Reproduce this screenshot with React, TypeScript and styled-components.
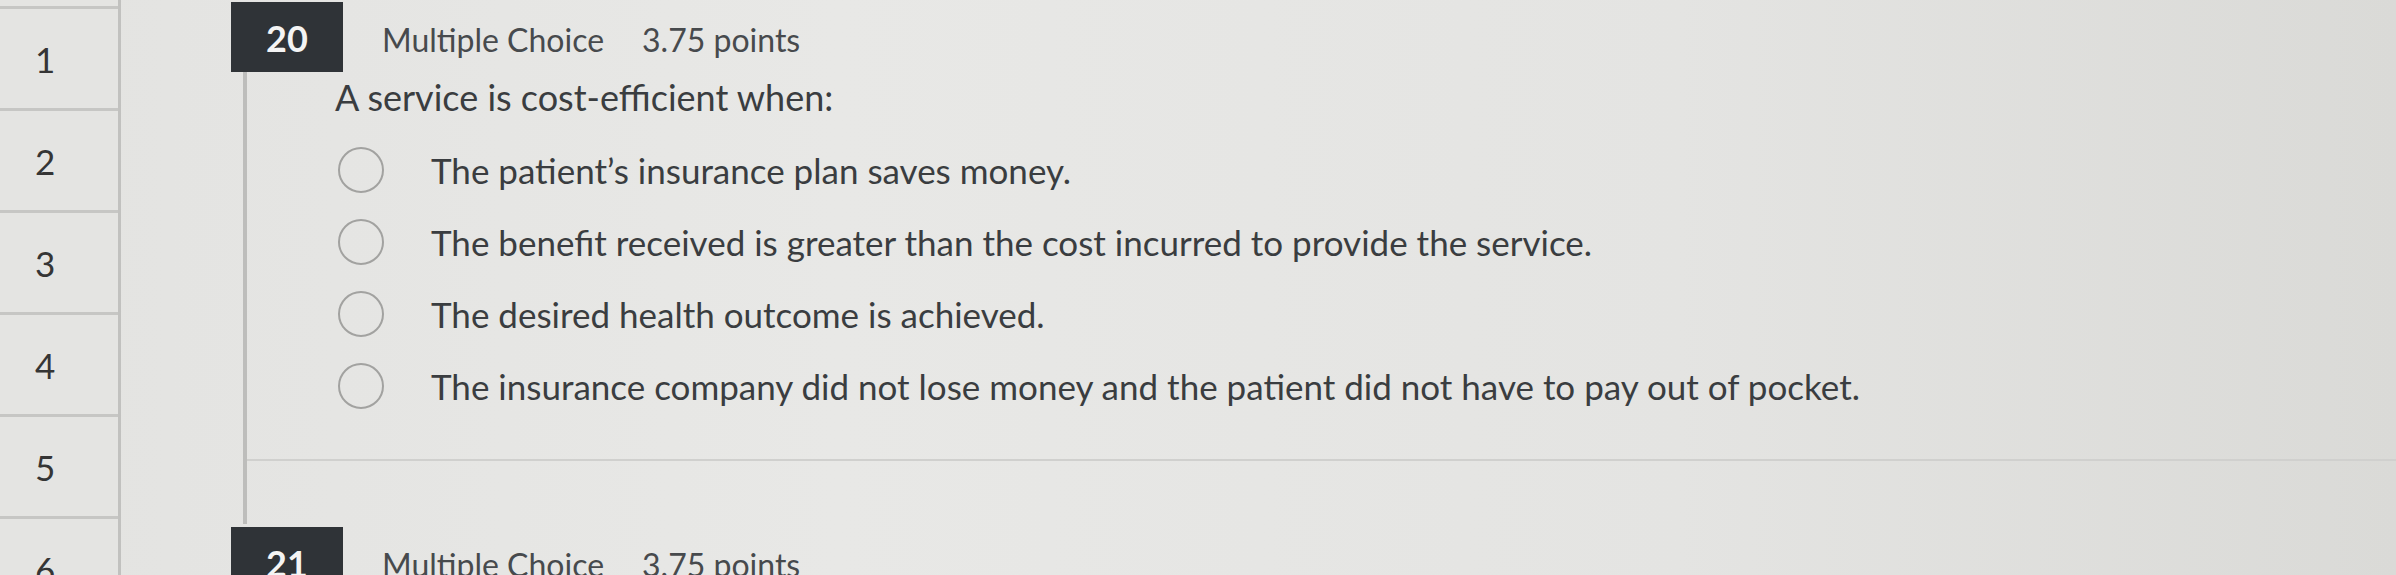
import styled, { createGlobalStyle } from "styled-components";

const GlobalStyle = createGlobalStyle`
  html,
  body {
    margin: 0;
    height: 575px;
    overflow: hidden;
  }

  body {
    background: linear-gradient(90deg, #e3e3e1 0%, #e8e8e6 35%, #e4e4e2 70%, #dadad7 100%);
    font-family: Lato, "Noto Sans", sans-serif;
    color: #3a3d40;
  }
`;

const Page = styled.div`
  display: flex;
  height: 575px;
  overflow: hidden;
`;

const Nav = styled.ul`
  list-style: none;
  margin: 0;
  padding: 6px 0 0;
  width: 118px;
  flex-shrink: 0;
  border-right: 3px solid #c1c1bf;
  background: #e4e4e2;
`;

const NavItem = styled.li`
  box-sizing: border-box;
  height: 102px;
  border-top: 3px solid #c6c6c4;
  display: flex;
  align-items: center;
  padding-left: 35px;
  font-size: 35px;
  color: #353535;
`;

const Main = styled.main`
  flex: 1;
  padding: 2px 0 0 110px;
`;

const Question = styled.section`
  & + & {
    margin-top: 3px;
  }
`;

const Header = styled.header`
  display: flex;
  align-items: baseline;
`;

const Badge = styled.span`
  box-sizing: border-box;
  width: 112px;
  height: 70px;
  padding-top: 2px;
  display: flex;
  align-items: center;
  justify-content: center;
  background: #2f3337;
  color: #f4f4f4;
  font-size: 36px;
  font-weight: 700;
`;

const HeaderText = styled.span<{ $gap: number }>`
  margin-left: ${(p) => p.$gap}px;
  font-size: 32px;
  color: #474a4d;
`;

const Body = styled.div`
  margin-left: 12px;
  border-left: 4px solid #bdbdbb;
  padding-bottom: 63px;
`;

const Prompt = styled.p`
  margin: 0;
  padding: 4px 0 0 88px;
  font-size: 36px;
  line-height: 1.2;
`;

const Answers = styled.div`
  margin-top: 15px;
  padding: 0 0 37px 91px;
  border-bottom: 2px solid #d0d0ce;
`;

const Answer = styled.label`
  display: flex;
  align-items: center;
  height: 72px;
  font-size: 35px;
`;

const Radio = styled.span`
  box-sizing: border-box;
  width: 46px;
  height: 46px;
  flex-shrink: 0;
  border: 2.5px solid #a2a2a0;
  border-radius: 50%;
  margin-right: 47px;
`;

const answers = [
  "The patient’s insurance plan saves money.",
  "The benefit received is greater than the cost incurred to provide the service.",
  "The desired health outcome is achieved.",
  "The insurance company did not lose money and the patient did not have to pay out of pocket.",
];

export default function App() {
  return (
    <>
      <GlobalStyle />
      <Page>
        <Nav>
          {[1, 2, 3, 4, 5, 6].map((n) => (
            <NavItem key={n}>{n}</NavItem>
          ))}
        </Nav>
        <Main>
          <Question>
            <Header>
              <Badge>20</Badge>
              <HeaderText $gap={39}>Multiple Choice</HeaderText>
              <HeaderText $gap={38}>3.75 points</HeaderText>
            </Header>
            <Body>
              <Prompt>A service is cost-efficient when:</Prompt>
              <Answers>
                {answers.map((a) => (
                  <Answer key={a}>
                    <Radio />
                    {a}
                  </Answer>
                ))}
              </Answers>
            </Body>
          </Question>
          <Question>
            <Header>
              <Badge>21</Badge>
              <HeaderText $gap={39}>Multiple Choice</HeaderText>
              <HeaderText $gap={38}>3.75 points</HeaderText>
            </Header>
          </Question>
        </Main>
      </Page>
    </>
  );
}
